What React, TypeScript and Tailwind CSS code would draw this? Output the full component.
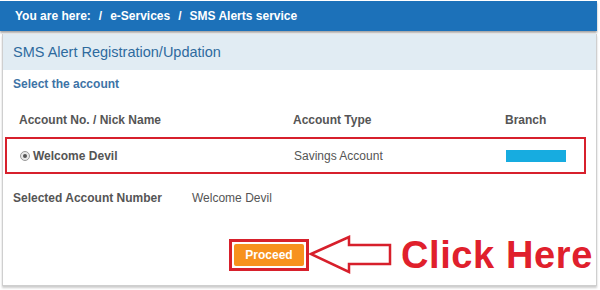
import React from 'react';

const font = { fontFamily: '"Liberation Sans", Arial, sans-serif' };

function Radio() {
  return (
    <span className="inline-flex h-[10px] w-[10px] items-center justify-center rounded-full border border-[#9a9a9a] bg-[#e8e8e8]">
      <span className="h-[4px] w-[4px] rounded-full bg-[#555]" />
    </span>
  );
}

function Arrow() {
  return (
    <svg width="84" height="40" viewBox="0 0 84 40" className="shrink-0">
      <polygon
        points="2,19 40,2 40,10 81,10 81,29 40,29 40,37"
        fill="white"
        stroke="#d71f2b"
        strokeWidth="2.5"
        strokeLinejoin="miter"
      />
    </svg>
  );
}

export default function App() {
  return (
    <div className="h-[290px] w-[600px] overflow-hidden bg-white pt-px" style={font}>
      <div className="flex h-[30px] w-[597px] items-center bg-[#1c71b9] pl-[15px] text-[12px] font-bold text-white shadow-[0_2px_2px_rgba(0,0,0,0.35)]">
        You are here:<span className="px-[8px]">/</span>e-Services<span className="px-[8px]">/</span>SMS Alerts service
      </div>
      <div className="ml-[2px] mt-[3px] h-[252px] w-[595px] border-x border-b border-[#cfcfcf] shadow-[0_2px_2px_rgba(0,0,0,0.2)]">
        <div className="flex h-[36px] items-center bg-[#e1ecf3] pl-[10px] pt-[2px] text-[14.5px] text-[#2e6a9e]">
          SMS Alert Registration/Updation
        </div>
        <div className="pl-[10px] pt-[5px] text-[12px] font-bold text-[#3d73a6]">Select the account</div>
        <div className="mt-[18px] grid grid-cols-[274px_212px_1fr] pl-[16px] text-[12px] font-bold text-[#555]">
          <span>Account No. / Nick Name</span>
          <span>Account Type</span>
          <span>Branch</span>
        </div>
        <div className="ml-[2px] mt-[8px] grid h-[37px] w-[581px] grid-cols-[274px_212px_1fr] items-center border-2 border-[#d7202c] pl-[13px] text-[12px] text-[#555]">
          <span className="flex items-center gap-[3px] font-bold">
            <Radio />
            Welcome Devil
          </span>
          <span>Savings Account</span>
          <span className="h-[12px] w-[60px] bg-[#17ace0]" />
        </div>
        <div className="mt-[15px] flex pl-[10px] text-[12px] text-[#555]">
          <span className="w-[179px] font-bold">Selected Account Number</span>
          <span>Welcome Devil</span>
        </div>
        <div className="mt-[28px] flex items-center pl-[226px]">
          <div className="border-[3px] border-[#d7202c] p-[2px]">
            <button className="flex h-[22px] w-[70px] items-center justify-center rounded-[2px] bg-[#f7921e] text-[12px] font-bold text-white">
              Proceed
            </button>
          </div>
          <Arrow />
          <span className="ml-[8px] text-[38px] font-bold leading-none tracking-[0.6px] text-[#e0202c]">Click Here</span>
        </div>
      </div>
    </div>
  );
}
